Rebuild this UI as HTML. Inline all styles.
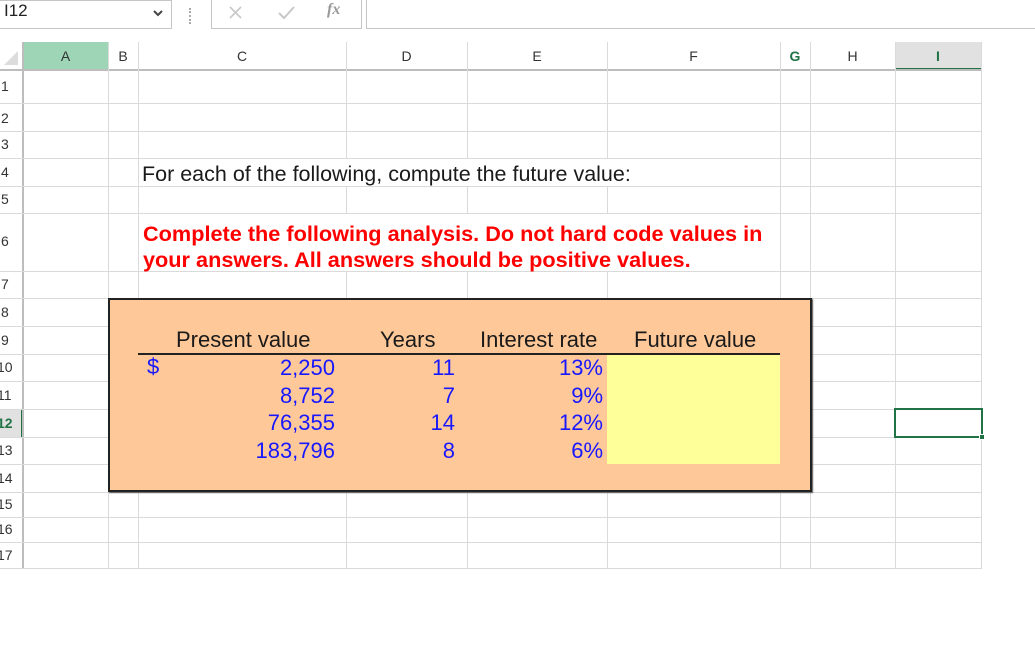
<!DOCTYPE html>
<html><head><meta charset="utf-8"><style>
*{margin:0;padding:0;box-sizing:border-box}
body{width:1035px;height:658px;background:#fff;position:relative;overflow:hidden;font-family:"Liberation Sans",Arial,sans-serif}
.a{position:absolute}
.v{position:absolute;width:1px;background:#dadada;top:42px;height:527px}
.h{position:absolute;height:1px;background:#dadada;left:0;width:982px}
.rh{position:absolute;left:0;width:22px;font-size:14px;color:#333;padding-left:1px}
.ch{position:absolute;top:42px;height:28px;line-height:28px;text-align:center;font-size:14px;color:#333}
.t{position:absolute;font-size:22px;color:#1a1a1a;white-space:nowrap}
.b{position:absolute;font-size:22px;color:#1818ff;text-align:right;white-space:nowrap}
</style></head><body>
<div class="a" style="left:0;top:0;width:172px;height:29px;border:1px solid #c6c6c6;border-left:none"></div>
<div class="a" style="left:4px;top:1px;font-size:17px;color:#222">I12</div>
<svg class="a" style="left:152px;top:8px" width="12" height="10"><path d="M2 3 L6 7 L10 3" stroke="#444" stroke-width="2" fill="none"/></svg>
<div class="a" style="left:189px;top:8px;width:2px;height:16px;border-left:2px dotted #aaa"></div>
<div class="a" style="left:211px;top:0;width:151px;height:29px;border:1px solid #c6c6c6;border-top:none"></div>
<svg class="a" style="left:228px;top:5px" width="16" height="16"><path d="M2 2 L13 13 M13 2 L2 13" stroke="#c8c8c8" stroke-width="1.6"/></svg>
<svg class="a" style="left:277px;top:5px" width="20" height="16"><path d="M2 8 L7 13 L17 2" stroke="#c8c8c8" stroke-width="2" fill="none"/></svg>
<div class="a" style="left:327px;top:1px;font-family:'Liberation Serif',serif;font-style:italic;font-weight:bold;font-size:16px;color:#999">fx</div>
<div class="a" style="left:366px;top:0;width:680px;height:29px;border:1px solid #c6c6c6;border-top:none"></div>

<svg class="a" style="left:3px;top:50px" width="16" height="16"><path d="M15 1 L15 15 L1 15 Z" fill="#dcdcdc"/></svg>
<div class="a" style="left:23px;top:42px;width:85px;height:28px;background:#9fd5b7"></div>
<div class="a" style="left:895px;top:42px;width:86px;height:28px;background:#e1e1e1;border-bottom:2px solid #217346"></div>
<div class="a" style="left:0;top:409px;width:23px;height:28px;background:#e1e1e1;border-right:2px solid #217346"></div>
<div class="ch" style="left:23px;width:85px">A</div>
<div class="ch" style="left:108px;width:30px">B</div>
<div class="ch" style="left:138px;width:208px">C</div>
<div class="ch" style="left:346px;width:121px">D</div>
<div class="ch" style="left:467px;width:140px">E</div>
<div class="ch" style="left:607px;width:173px">F</div>
<div class="ch" style="left:780px;width:30px;color:#217346;font-weight:bold">G</div>
<div class="ch" style="left:810px;width:85px">H</div>
<div class="ch" style="left:895px;width:86px;color:#217346;font-weight:bold">I</div>
<div class="a" style="left:0;top:69px;width:982px;height:2px;background:#bdbdbd"></div>
<div class="a" style="left:22px;top:42px;width:2px;height:527px;background:#bdbdbd"></div>

<div class="v" style="left:108px"></div><div class="v" style="left:138px"></div><div class="v" style="left:346px"></div><div class="v" style="left:467px"></div><div class="v" style="left:607px"></div><div class="v" style="left:780px"></div><div class="v" style="left:810px"></div><div class="v" style="left:895px"></div><div class="v" style="left:981px"></div>
<div class="h" style="top:103px"></div><div class="h" style="top:131px"></div><div class="h" style="top:158px"></div><div class="h" style="top:186px"></div><div class="h" style="top:213px"></div><div class="h" style="top:271px"></div><div class="h" style="top:298px"></div><div class="h" style="top:326px"></div><div class="h" style="top:354px"></div><div class="h" style="top:381px"></div><div class="h" style="top:409px"></div><div class="h" style="top:437px"></div><div class="h" style="top:464px"></div><div class="h" style="top:492px"></div><div class="h" style="top:517px"></div><div class="h" style="top:542px"></div><div class="h" style="top:568px"></div>
<div class="a" style="left:139px;top:159px;width:641px;height:27px;background:#fff"></div>
<div class="a" style="left:139px;top:214px;width:641px;height:57px;background:#fff"></div>

<div class="rh" style="top:78px">1</div><div class="rh" style="top:110px">2</div><div class="rh" style="top:136px">3</div><div class="rh" style="top:164px">4</div><div class="rh" style="top:191px">5</div><div class="rh" style="top:233px">6</div><div class="rh" style="top:276px">7</div><div class="rh" style="top:304px">8</div><div class="rh" style="top:332px">9</div><div class="rh" style="top:359px;left:-4px">10</div><div class="rh" style="top:387px;left:-4px">11</div><div class="rh" style="top:415px;left:-4px;color:#217346;font-weight:bold">12</div><div class="rh" style="top:442px;left:-4px">13</div><div class="rh" style="top:470px;left:-4px">14</div><div class="rh" style="top:496px;left:-4px">15</div><div class="rh" style="top:521px;left:-4px">16</div><div class="rh" style="top:547px;left:-4px">17</div>

<div class="t" style="left:142px;top:162px;font-size:21.5px">For each of the following, compute the future value:</div>
<div class="t" style="left:143px;top:221px;color:#ff0000;font-weight:bold;line-height:26px;font-size:21.7px">Complete the following analysis. Do not hard code values in<br>your answers. All answers should be positive values.</div>

<div class="a" style="left:108px;top:298px;width:704px;height:194px;background:#ffc898;border:2px solid #222;box-shadow:1px 1px 1px #555"></div>
<div class="a" style="left:607px;top:355px;width:173px;height:109px;background:#ffff99"></div>
<div class="a" style="left:138px;top:353px;width:642px;height:2px;background:#222"></div>
<div class="t" style="left:176px;top:327px">Present value</div>
<div class="t" style="left:380px;top:327px">Years</div>
<div class="t" style="left:480px;top:327px">Interest rate</div>
<div class="t" style="left:634px;top:327px">Future value</div>
<div class="b" style="left:147px;top:354px">$</div>
<div class="b" style="left:200px;width:135px;top:354px;line-height:27.5px">2,250<br>8,752<br>76,355<br>183,796</div>
<div class="b" style="left:360px;width:95px;top:354px;line-height:27.5px">11<br>7<br>14<br>8</div>
<div class="b" style="left:480px;width:123px;top:354px;line-height:27.5px">13%<br>9%<br>12%<br>6%</div>

<div class="a" style="left:894px;top:408px;width:89px;height:30px;border:2px solid #217346"></div>
<div class="a" style="left:979px;top:434px;width:6px;height:6px;background:#217346;border:1px solid #fff"></div>
</body></html>
